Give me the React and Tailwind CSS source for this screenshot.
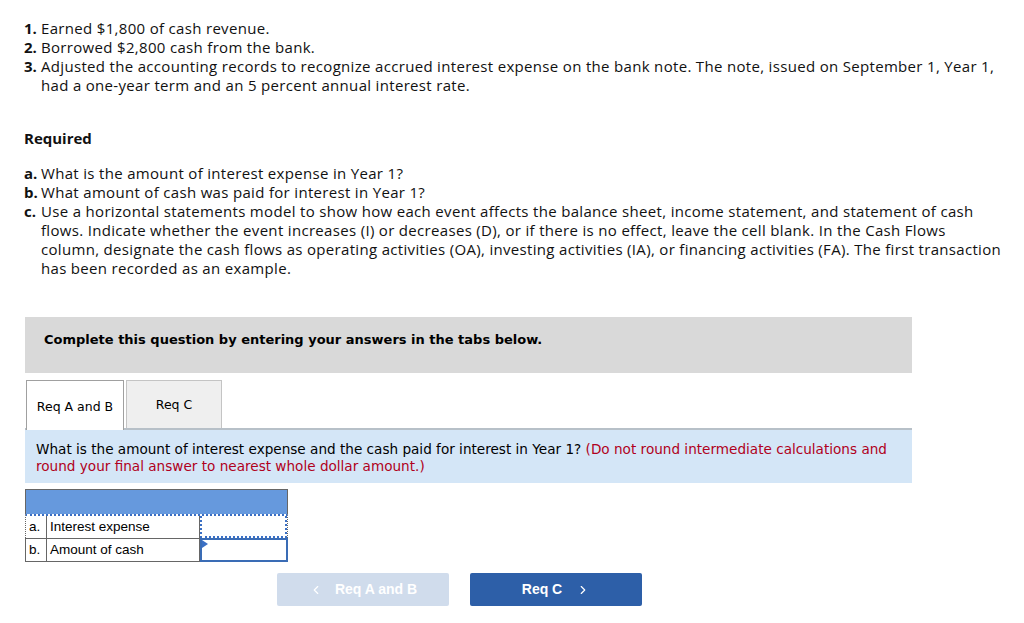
import React from "react";
import { ChevronLeft, ChevronRight } from "lucide-react";

const prox = { fontFamily: "'Open Sans', sans-serif" };

function Item({ n, children }) {
  return (
    <div className="flex">
      <span className="w-[17px] shrink-0 font-bold tracking-normal">{n}</span>
      <span>{children}</span>
    </div>
  );
}

export default function App() {
  return (
    <div className="w-[1024px] h-[623px] bg-white text-[#111] overflow-hidden relative">
      <div className="pl-[24px] pr-[22px] pt-[19px] text-[15px] leading-[19px] tracking-[0.32px]" style={prox}>
        <Item n="1.">Earned $1,800 of cash revenue.</Item>
        <Item n="2.">Borrowed $2,800 cash from the bank.</Item>
        <Item n="3.">
          Adjusted the accounting records to recognize accrued interest expense on the bank note. The note, issued on September 1, Year 1, had a one-year term and an 5 percent annual interest rate.
        </Item>
        <div className="mt-[34px] font-bold tracking-normal">Required</div>
        <div className="mt-[16px]">
          <Item n="a.">What is the amount of interest expense in Year 1?</Item>
          <Item n="b.">What amount of cash was paid for interest in Year 1?</Item>
          <Item n="c.">
            Use a horizontal statements model to show how each event affects the balance sheet, income statement, and statement of cash flows. Indicate whether the event increases (I) or decreases (D), or if there is no effect, leave the cell blank. In the Cash Flows column, designate the cash flows as operating activities (OA), investing activities (IA), or financing activities (FA). The first transaction has been recorded as an example.
          </Item>
        </div>
      </div>

      <div className="ml-[25px] w-[887px] mt-[39px]" style={{ fontFamily: "Verdana, 'DejaVu Sans', sans-serif" }}>
        <div className="h-[56px] bg-[#d9d9d9] pl-[19px] pt-[15px] text-[13px] leading-[16px] font-bold text-black">
          Complete this question by entering your answers in the tabs below.
        </div>
        <div className="mt-[7px] flex items-end gap-[2px] pl-[1px] h-[50px] border-b-[2px] border-[#b7c0c8]">
          <div className="w-[98px] h-[50px] -mb-[2px] pt-[3px] bg-white border border-[#a0a0a0] border-b-0 flex items-center justify-center text-[12.5px] text-black">
            Req A and B
          </div>
          <div className="w-[96px] h-[48px] pt-[2px] bg-[#efefef] border border-[#c4c4c4] border-b-0 flex items-center justify-center text-[12.5px] text-black">
            Req C
          </div>
        </div>
        <div className="h-[53px] bg-[#d4e6f7] pl-[11px] pt-[11px] text-[13.6px] leading-[17px] text-black">
          <p>
            What is the amount of interest expense and the cash paid for interest in Year 1?{" "}
            <span className="text-[#b00020]">(Do not round intermediate calculations and round your final answer to nearest whole dollar amount.)</span>
          </p>
        </div>
      </div>

      <div className="ml-[25px] mt-[6px] w-[263px] text-[13.5px] text-black" style={{ fontFamily: "'Liberation Sans', Arial, sans-serif" }}>
        <div className="h-[25px] bg-[#6699dd] border border-[#666] border-b-0" />
        <div className="flex h-[24px] border-l border-r border-[#666] border-t-2 border-t-[#3a6fc4] border-dotted">
          <div className="w-[21px] flex items-center pl-[3px] border-r border-solid border-[#666]">a.</div>
          <div className="w-[153px] flex items-center pl-[3px] border-r border-solid border-[#666]">Interest expense</div>
          <div className="flex-1 border-l-2 border-r-2 border-b-2 border-dotted border-[#3a6fc4]" />
        </div>
        <div className="flex h-[24px] border border-solid border-[#666]">
          <div className="w-[21px] flex items-center pl-[3px] border-r border-[#666]">b.</div>
          <div className="w-[153px] flex items-center pl-[3px] border-r border-[#666]">Amount of cash</div>
          <div className="flex-1 relative border-2 border-[#3a6cb5] -my-[1px] -mr-[1px]">
            <span className="absolute left-0 top-0 w-0 h-0 border-t-[4px] border-b-[4px] border-l-[6px] border-t-transparent border-b-transparent border-l-[#3a6fc4]" />
          </div>
        </div>
      </div>

      <div className="flex gap-[21px] ml-[277px] mt-[11px]" style={{ fontFamily: "'Liberation Sans', Arial, sans-serif" }}>
        <div className="w-[172px] h-[33px] rounded-[2px] bg-[#d0dcec] flex items-center justify-center text-white text-[14px] font-bold gap-[12px]">
          <ChevronLeft size={14} strokeWidth={2} />
          <span>Req A and B</span>
        </div>
        <div className="w-[172px] h-[33px] rounded-[2px] bg-[#2d5fa8] flex items-center justify-center text-white text-[14px] font-bold gap-[14px]">
          <span>Req C</span>
          <ChevronRight size={14} strokeWidth={2} />
        </div>
      </div>
    </div>
  );
}
